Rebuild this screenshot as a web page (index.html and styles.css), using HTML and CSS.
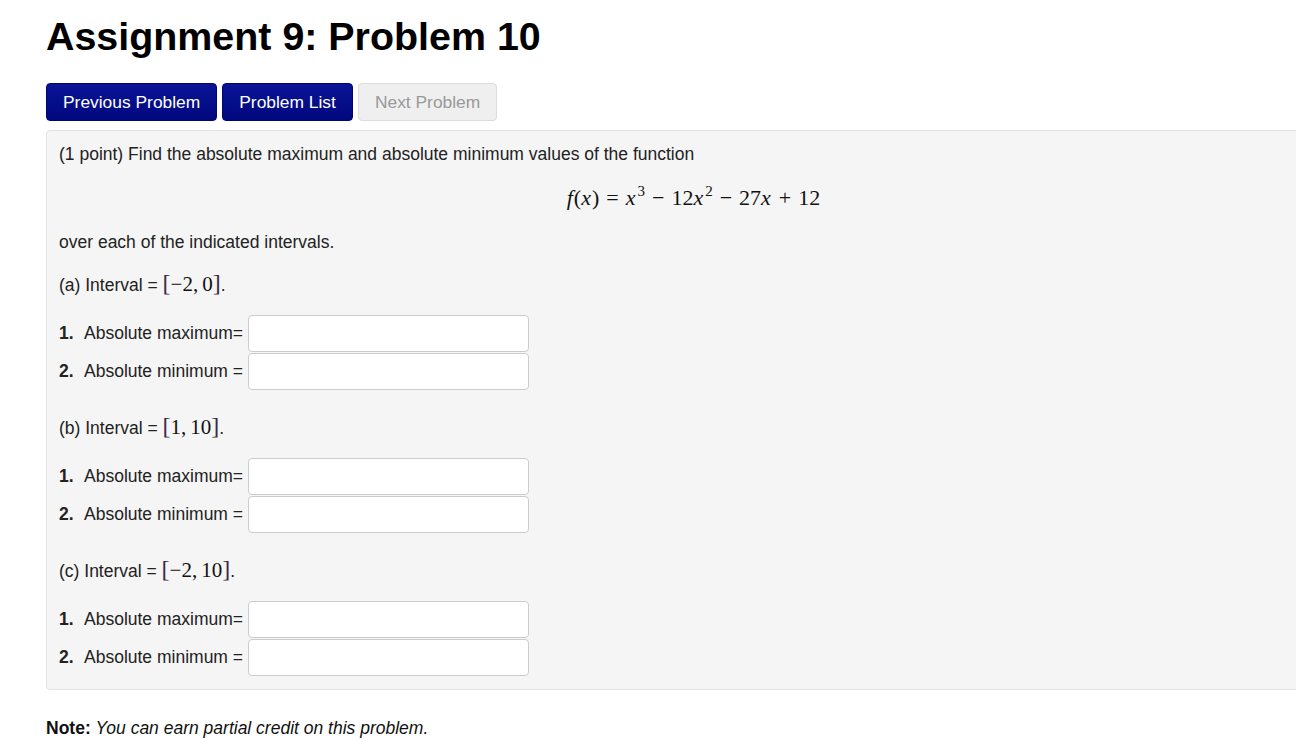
FILE: index.html
```html
<!DOCTYPE html>
<html>
<head>
<meta charset="utf-8">
<link rel="stylesheet" href="styles.css">
</head>
<body>
<div class="page">
  <h1 class="title">Assignment 9: Problem 10</h1>
  <div class="nav">
    <span class="btn">Previous Problem</span>
    <span class="btn">Problem List</span>
    <span class="btn disabled">Next Problem</span>
  </div>
  <div class="problem">
    <p class="line">(1 point) Find the absolute maximum and absolute minimum values of the function</p>
    <div class="formula"><span class="m"><i>f</i>(<i>x</i>)<span class="op">=</span><i>x</i><sup>3</sup><span class="op">−</span>12<i>x</i><sup>2</sup><span class="op">−</span>27<i>x</i><span class="op">+</span>12</span></div>
    <p class="line">over each of the indicated intervals.</p>

    <p class="line interval">(a) Interval = <span class="m im"><span class="br">[</span>−2,<span class="th"></span>0<span class="br">]</span></span>.</p>
    <div class="answers">
      <div class="row"><span class="lbl"><b>1.</b>Absolute maximum=</span><span class="inp"></span></div>
      <div class="row"><span class="lbl"><b>2.</b>Absolute minimum =</span><span class="inp"></span></div>
    </div>

    <p class="line interval">(b) Interval = <span class="m im"><span class="br">[</span>1,<span class="th"></span>10<span class="br">]</span></span>.</p>
    <div class="answers">
      <div class="row"><span class="lbl"><b>1.</b>Absolute maximum=</span><span class="inp"></span></div>
      <div class="row"><span class="lbl"><b>2.</b>Absolute minimum =</span><span class="inp"></span></div>
    </div>

    <p class="line interval">(c) Interval = <span class="m im"><span class="br">[</span>−2,<span class="th"></span>10<span class="br">]</span></span>.</p>
    <div class="answers last">
      <div class="row"><span class="lbl"><b>1.</b>Absolute maximum=</span><span class="inp"></span></div>
      <div class="row"><span class="lbl"><b>2.</b>Absolute minimum =</span><span class="inp"></span></div>
    </div>
  </div>
  <p class="note"><b>Note:</b> <i>You can earn partial credit on this problem.</i></p>
</div>
</body>
</html>
```
FILE: styles.css
```css
html, body {
  margin: 0;
  padding: 0;
  overflow: hidden;
  background: #fff;
}
body {
  font-family: "Liberation Sans", Arial, sans-serif;
  font-size: 17.5px;
  color: #222;
}
.page {
  padding-left: 46px;
  width: 1296px;
}
.title {
  margin: 0;
  padding-top: 13px;
  height: 47px;
  font-size: 39.4px;
  line-height: 47px;
  font-weight: bold;
  color: #000;
}
.nav {
  display: flex;
  gap: 5px;
  margin-top: 23px;
  height: 38px;
}
.btn {
  display: flex;
  align-items: center;
  padding: 0 16px;
  height: 38px;
  box-sizing: border-box;
  border-radius: 4px;
  background: linear-gradient(#0a1496, #00087e);
  border: 1px solid #00066a;
  color: #fff;
  font-size: 17.4px;
}
.btn.disabled {
  background: #efefef;
  border: 1px solid #dcdcdc;
  color: #999;
}
.problem {
  margin-top: 9px;
  width: 1296px;
  box-sizing: border-box;
  background: #f5f5f5;
  border: 1px solid #e3e3e3;
  border-radius: 4px;
  padding: 13px 13px 13px 12px;
  color: #222;
}
.line {
  margin: 0;
  height: 20px;
  line-height: 20px;
}
.formula {
  text-align: center;
  margin: 24px 0 24px;
  height: 20px;
  line-height: 20px;
}
.m {
  font-family: "Liberation Serif", "DejaVu Serif", serif;
  font-size: 21px;
  color: #111;
}
.formula .m {
  font-size: 22px;
}
.m i {
  margin-right: 1px;
}
.m sup {
  font-size: 15px;
  vertical-align: 0;
  position: relative;
  top: -9px;
  margin-left: 1px;
}
.op {
  display: inline-block;
  margin: 0 7px;
}
.th {
  display: inline-block;
  width: 4px;
}
.interval {
  margin-top: 21px;
}
.im {
  line-height: 20px;
}
.br {
  color: #3a2a4a;
  font-size: 24px;
  line-height: 20px;
}
.answers {
  margin-top: 22px;
  display: flex;
  flex-direction: column;
  gap: 1px;
  margin-bottom: 26px;
}
.answers + .interval {
  margin-top: 0;
}
.answers.last {
  margin-bottom: 0;
}
.row {
  display: flex;
  align-items: center;
  height: 37px;
}
.lbl {
  width: 189px;
  flex: none;
}
.lbl b {
  display: inline-block;
  width: 25px;
}
.inp {
  width: 281px;
  height: 37px;
  box-sizing: border-box;
  background: #fff;
  border: 1px solid #ccc;
  border-radius: 4px;
}
.note {
  margin: 28px 0 0;
  line-height: 20px;
  color: #111;
}
```
